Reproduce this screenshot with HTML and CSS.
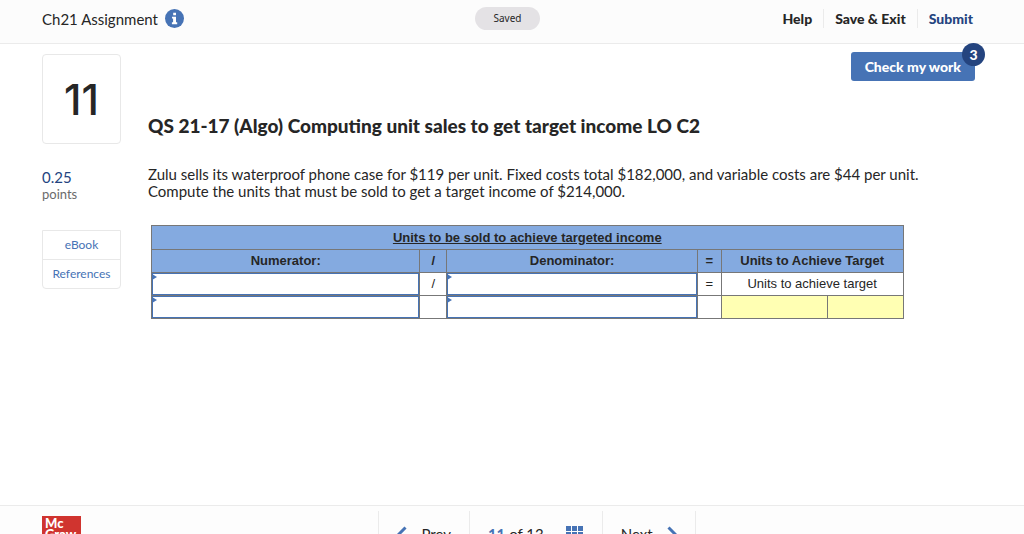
FILE: index.html
```html
<!DOCTYPE html>
<html lang="en">
<head>
    <meta charset="UTF-8">
    <meta name="viewport" content="width=device-width, initial-scale=1.0">
    <title>Ch21 Assignment</title>
    <link rel="stylesheet" href="styles.css">
</head>
<body>
    <header class="header">
        <div class="assignment">
            <span>Ch21 Assignment</span>
            <button type="button" class="info-btn" aria-label="Assignment info">
                <svg width="19" height="19" viewBox="0 0 19 19">
                    <circle cx="9.5" cy="9.5" r="9.5" fill="#4673b5"/>
                    <path d="M8.2 3.8h2.8v2.5H8.2zM7 7.7h4v5.6h1.2v2H6.9v-2h1.2V9.6H7z" fill="#fff"/>
                </svg>
            </button>
        </div>
        <div class="status">Saved</div>
        <nav class="header-nav">
            <a href="#">Help</a>
            <a href="#">Save &amp; Exit</a>
            <a href="#" class="submit">Submit</a>
        </nav>
    </header>

    <main class="main">
        <aside class="sidebar">
            <div class="question-number">11</div>
            <div class="points">
                <div class="points-value">0.25</div>
                <div class="points-label">points</div>
            </div>
            <div class="resources">
                <a href="#">eBook</a>
                <a href="#">References</a>
            </div>
        </aside>

        <section class="content">
            <div class="actions">
                <button type="button" class="check-btn">Check my work<span class="badge">3</span></button>
            </div>
            <h1>QS 21-17 (Algo) Computing unit sales to get target income LO C2</h1>
            <p>Zulu sells its waterproof phone case for $119 per unit. Fixed costs total $182,000, and variable costs are $44 per unit. Compute the units that must be sold to get a target income of $214,000.</p>

            <table class="answer-table">
                <colgroup>
                    <col>
                    <col class="col-slash">
                    <col class="col-denominator">
                    <col class="col-equals">
                    <col class="col-result">
                    <col class="col-unit">
                </colgroup>
                <thead>
                    <tr class="table-title">
                        <th colspan="6">Units to be sold to achieve targeted income</th>
                    </tr>
                    <tr>
                        <th>Numerator:</th>
                        <th>/</th>
                        <th>Denominator:</th>
                        <th>=</th>
                        <th colspan="2">Units to Achieve Target</th>
                    </tr>
                </thead>
                <tbody>
                    <tr>
                        <td class="entry"><input type="text" aria-label="Numerator label"></td>
                        <td>/</td>
                        <td class="entry"><input type="text" aria-label="Denominator label"></td>
                        <td>=</td>
                        <td colspan="2">Units to achieve target</td>
                    </tr>
                    <tr>
                        <td class="entry"><input type="text" aria-label="Numerator amount"></td>
                        <td></td>
                        <td class="entry"><input type="text" aria-label="Denominator amount"></td>
                        <td></td>
                        <td class="calculated"></td>
                        <td class="calculated"></td>
                    </tr>
                </tbody>
            </table>
        </section>
    </main>

    <footer class="footer">
        <div class="logo">Mc<br>Graw<br>Hill</div>
        <nav class="pager">
            <a href="#" class="prev">
                <svg width="10" height="16" viewBox="0 0 10 16"><path d="M8.5 1.5L2 8l6.5 6.5" fill="none" stroke="#4673b5" stroke-width="3"/></svg>
                Prev
            </a>
            <div class="page-count">
                <span><b>11</b> of 13</span>
                <button type="button" class="grid-btn" aria-label="All questions">
                    <svg width="18" height="17" viewBox="0 0 18 17" fill="#4673b5">
                        <path d="M0 0h5v5H0zM6 0h5v5H6zM12 0h5v5h-5zM0 6h5v5H0zM6 6h5v5H6zM12 6h5v5h-5zM0 12h5v5H0zM6 12h5v5H6zM12 12h5v5h-5z"/>
                    </svg>
                </button>
            </div>
            <a href="#" class="next">
                Next
                <svg width="10" height="16" viewBox="0 0 10 16"><path d="M1.5 1.5L8 8l-6.5 6.5" fill="none" stroke="#4673b5" stroke-width="3"/></svg>
            </a>
        </nav>
    </footer>
</body>
</html>
```
FILE: styles.css
```css
* {
    box-sizing: border-box;
}
body {
    display: flex;
    flex-direction: column;
    height: 100vh;
    margin: 0;
    overflow: hidden;
    font-family: Lato, sans-serif;
    font-size: 15px;
    color: #262626;
    background: #fff;
}
a {
    color: inherit;
    text-decoration: none;
}
button {
    font-family: inherit;
    border: 0;
    cursor: pointer;
}

/* header */
.header {
    display: grid;
    grid-template-columns: 1fr auto 1fr;
    align-items: center;
    padding: 7px 51px 13px 42px;
    background: #fcfcfc;
    border-bottom: 1px solid #ebebeb;
}
.assignment {
    display: flex;
    align-items: center;
    gap: 7px;
    line-height: 18px;
}
.info-btn {
    display: flex;
    padding: 0;
    background: none;
}
.status {
    padding: 0 19px;
    border-radius: 12px;
    background: #e4e2e5;
    font-family: "Noto Sans", sans-serif;
    font-size: 10px;
    line-height: 23px;
}
.header-nav {
    display: flex;
    justify-content: flex-end;
    font-size: 14px;
    font-weight: 900;
    line-height: 19px;
}
.header-nav a {
    padding: 0 11px;
    border-left: 1px solid #ebebeb;
}
.header-nav a:first-child {
    border-left: 0;
}
.header-nav a:last-child {
    padding-right: 0;
}
.header-nav .submit {
    color: #24447f;
}

/* question */
.main {
    display: flex;
    flex: 1;
    gap: 27px;
    min-height: 0;
    padding: 8px 49px 0 42px;
}
.sidebar {
    flex: 0 0 79px;
    padding-top: 2px;
}
.question-number {
    height: 90px;
    border: 1px solid #e8e8e8;
    border-radius: 4px;
    font-family: Inter, sans-serif;
    font-size: 42px;
    font-weight: 500;
    line-height: 90px;
    text-align: center;
}
.points {
    margin: 24px 0 28px;
}
.points-value {
    line-height: 18px;
    color: #24447f;
}
.points-label {
    font-size: 13px;
    line-height: 16px;
    color: #6b6b6b;
}
.resources {
    border: 1px solid #e8e8e8;
    border-radius: 0 0 4px 4px;
    font-size: 12px;
    line-height: 28px;
    text-align: center;
    color: #4673b5;
}
.resources a {
    display: block;
}
.resources a + a {
    border-top: 1px solid #e8e8e8;
}
.content {
    flex: 1;
    min-width: 0;
}
.actions {
    display: flex;
    justify-content: flex-end;
}
.check-btn {
    position: relative;
    padding: 0 14px;
    border-radius: 3px;
    background: #4673b5;
    font-size: 14px;
    font-weight: 900;
    line-height: 29px;
    color: #fff;
}
.badge {
    position: absolute;
    top: -9px;
    right: -10px;
    width: 23px;
    border-radius: 50%;
    background: #24447f;
    line-height: 23px;
    text-align: center;
}
h1 {
    margin: 33px 0 0;
    font-size: 19px;
    font-weight: 900;
    line-height: 24px;
}
p {
    margin: 28px 0 25px;
    line-height: 17px;
}

/* answer table */
.answer-table {
    width: 91%;
    margin-left: 3px;
    border-collapse: collapse;
    table-layout: fixed;
    font-family: "Liberation Sans", Arial, sans-serif;
    font-size: 13px;
    line-height: 22px;
}
.answer-table th,
.answer-table td {
    height: 23px;
    padding: 0;
    border: 1px solid #777;
    text-align: center;
}
.answer-table th {
    background: #84aae0;
}
.answer-table .table-title th {
    height: 24px;
    text-decoration: underline;
}
.col-slash {
    width: 27px;
}
.col-denominator {
    width: 33.3%;
}
.col-equals {
    width: 24px;
}
.col-result {
    width: 14.1%;
}
.col-unit {
    width: 10.1%;
}
.entry {
    position: relative;
}
.entry::before {
    content: "";
    position: absolute;
    top: 1px;
    left: 0;
    border: 3px solid transparent;
    border-left: 5px solid #4673b5;
    border-right: 0;
}
.entry input {
    display: block;
    width: 100%;
    height: 22px;
    padding: 0 6px;
    border: 1px solid #4673b5;
    font: inherit;
}
.calculated {
    background: #ffffb3;
}

/* footer */
.footer {
    position: relative;
    display: flex;
    flex: 0 0 29px;
    align-items: flex-start;
    justify-content: center;
    min-height: 0;
    border-top: 1px solid #ebebeb;
    background: #fdfdfd;
}
.logo {
    position: absolute;
    top: 10px;
    left: 42px;
    width: 39px;
    padding: 2px 3px;
    background: #d0342f;
    font-size: 13px;
    font-weight: 900;
    line-height: 11px;
    color: #fff;
}
.pager {
    display: flex;
    height: 46px;
    margin: 5px 0 0 50px;
    border: 1px solid #ebebeb;
    border-width: 0 1px;
}
.pager > * {
    display: flex;
    align-items: center;
    gap: 14px;
    padding: 0 18px;
}
.pager .page-count {
    gap: 22px;
    border: 1px solid #ebebeb;
    border-width: 0 1px;
}
.page-count b {
    color: #4673b5;
}
.grid-btn {
    display: flex;
    padding: 0;
    background: none;
}
```
